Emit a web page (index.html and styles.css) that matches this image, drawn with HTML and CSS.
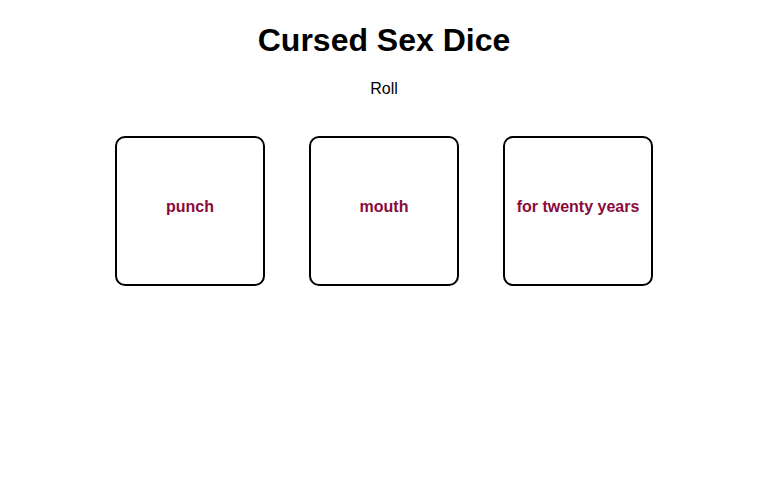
FILE: index.html
```html
<!DOCTYPE html>
<html>
<head>
  <title>Cursed Sex Dice</title>
  <link rel="stylesheet" href="styles.css">
</head>
<body>
  <div class="page">
    <h1 class="title">Cursed Sex Dice</h1>
    <div class="roll">Roll</div>
    <div class="dice">
      <div class="die"><span class="face">punch</span></div>
      <div class="die"><span class="face">mouth</span></div>
      <div class="die"><span class="face">for twenty years</span></div>
    </div>
  </div>
</body>
</html>
```

FILE: styles.css
```css
body {
  margin: 0;
  background-color: #ffffff;
  font-family: 'Liberation Sans', Arial, sans-serif;
  color: #000000;
}

.page {
  display: flex;
  flex-direction: column;
  align-items: center;
  padding-top: 22px;
}

.title {
  font-size: 32px;
  margin: 0;
  line-height: 37px;
}

.roll {
  font-size: 16px;
  margin-top: 21px;
  cursor: pointer;
}

.dice {
  display: flex;
  gap: 44px;
  margin-top: 38px;
}

.die {
  width: 146px;
  height: 146px;
  border: 2px solid #000000;
  border-radius: 10px;
  display: flex;
  justify-content: center;
  align-items: center;
}

.face {
  font-size: 16px;
  font-weight: bold;
  color: #8a0a3c; /* wine red */
  margin-bottom: 8px;
}
```
